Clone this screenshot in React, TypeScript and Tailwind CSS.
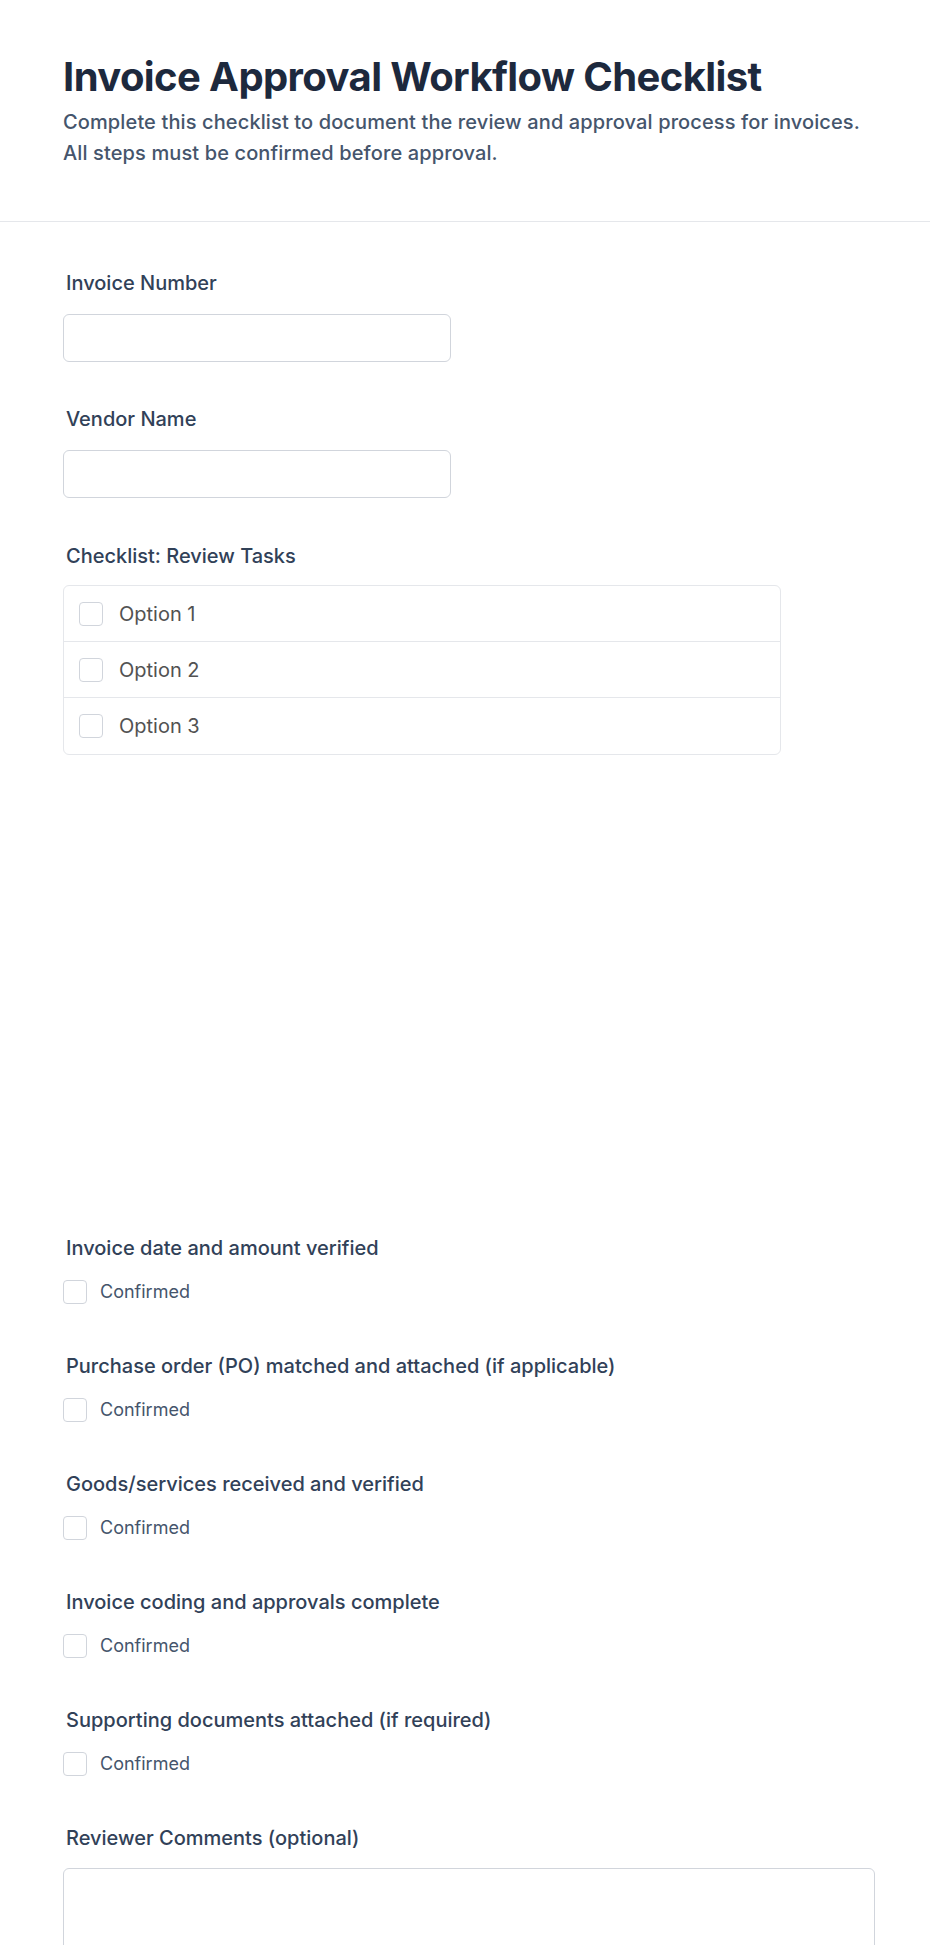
import { useState } from "react";

const reviewSteps = [
  "Invoice date and amount verified",
  "Purchase order (PO) matched and attached (if applicable)",
  "Goods/services received and verified",
  "Invoice coding and approvals complete",
  "Supporting documents attached (if required)",
];

function Box({ checked, onClick }: { checked: boolean; onClick: () => void }) {
  return (
    <button
      type="button"
      onClick={onClick}
      className={`w-6 h-6 shrink-0 rounded-[4px] border ${checked ? "bg-slate-700 border-slate-700" : "bg-white border-gray-300"}`}
    />
  );
}

export default function App() {
  const [tasks, setTasks] = useState([false, false, false]);
  const [steps, setSteps] = useState(reviewSteps.map(() => false));

  return (
    <div className="min-h-screen bg-white font-['Inter',sans-serif]">
      <header className="px-[63px] pt-[57px] pb-[52px] border-b border-gray-200">
        <h1 className="text-[40px] leading-10 font-bold text-slate-800 tracking-[-0.015em]">
          Invoice Approval Workflow Checklist
        </h1>
        <p className="mt-[10px] text-[20px] leading-[31px] font-medium text-slate-600 tracking-[0.006em]">
          Complete this checklist to document the review and approval process for invoices.
          <br />
          All steps must be confirmed before approval.
        </p>
      </header>

      <main className="px-[63px] pt-[47px]">
        <label className="block ml-[3px] text-[20px] leading-7 font-medium text-slate-700">Invoice Number</label>
        <input className="mt-[17px] block w-[388px] h-12 rounded-md border border-gray-300 px-3 outline-none" />

        <label className="block mt-[43px] ml-[3px] text-[20px] leading-7 font-medium text-slate-700">Vendor Name</label>
        <input className="mt-[17px] block w-[388px] h-12 rounded-md border border-gray-300 px-3 outline-none" />

        <label className="block mt-[44px] ml-[3px] text-[20px] leading-7 font-medium text-slate-700">Checklist: Review Tasks</label>
        <div className="mt-[15px] w-[718px] rounded-md border border-gray-200 divide-y divide-gray-200">
          {["Option 1", "Option 2", "Option 3"].map((o, i) => (
            <div key={o} className="h-14 flex items-center gap-4 px-[15px]">
              <Box checked={tasks[i]} onClick={() => setTasks(tasks.map((t, j) => (j === i ? !t : t)))} />
              <span className="text-[20px] text-neutral-600">{o}</span>
            </div>
          ))}
        </div>

        <div className="mt-[479px]">
          {reviewSteps.map((s, i) => (
            <div key={s} className={i > 0 ? "mt-[46px]" : ""}>
              <label className="block ml-[3px] text-[20px] leading-7 font-medium text-slate-700">{s}</label>
              <div className="mt-4 h-7 flex items-center gap-[13px]">
                <Box checked={steps[i]} onClick={() => setSteps(steps.map((t, j) => (j === i ? !t : t)))} />
                <span className="text-lg text-slate-600">Confirmed</span>
              </div>
            </div>
          ))}
        </div>

        <label className="block mt-[46px] ml-[3px] text-[20px] leading-7 font-medium text-slate-700">Reviewer Comments (optional)</label>
        <textarea className="mt-4 block w-[812px] h-40 rounded-md border border-gray-300 px-3 py-2 outline-none resize-none" />
      </main>
    </div>
  );
}
